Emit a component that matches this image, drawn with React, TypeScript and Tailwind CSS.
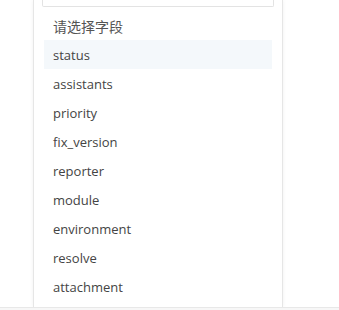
import React, { useState } from 'react';

const fields = [
  'status',
  'assistants',
  'priority',
  'fix_version',
  'reporter',
  'module',
  'environment',
  'resolve',
  'attachment',
];

const App: React.FC = () => {
  const [active] = useState('status');

  return (
    <div
      className="h-[310px] w-[339px] overflow-hidden bg-white flex flex-col text-[13px] text-[#444]"
      style={{ fontFamily: '"Open Sans", "Noto Sans CJK SC", sans-serif' }}
    >
      <div className="h-[307px] flex overflow-hidden">
        <div className="ml-[33px] w-[250px] border-x border-[#e6e6e6] shadow-[0_0_4px_rgba(0,0,0,0.06)] flex flex-col overflow-hidden">
          {/* search input, top is scrolled out of view */}
          <div className="mx-[8px] h-[7px] shrink-0 border-x border-b border-[#e3e3e3] rounded-b-[2px]" />
          <div
            className="h-[33px] shrink-0 flex items-center pl-[19px] pt-[5px] text-[14px] text-[#555]"
            style={{ fontFamily: '"Noto Sans CJK SC", sans-serif' }}
          >
            请选择字段
          </div>
          <ul className="flex flex-col">
            {fields.map((f) => (
              <li
                key={f}
                className={`mx-[10px] h-[29px] shrink-0 flex items-center pl-[9px] pt-[3px] ${
                  f === active ? 'bg-[#f4f8fb]' : ''
                }`}
              >
                {f}
              </li>
            ))}
          </ul>
        </div>
      </div>
      <div className="flex-1 border-t border-[#e8e8e8] bg-[#f7f7f7]" />
    </div>
  );
};

export default App;
